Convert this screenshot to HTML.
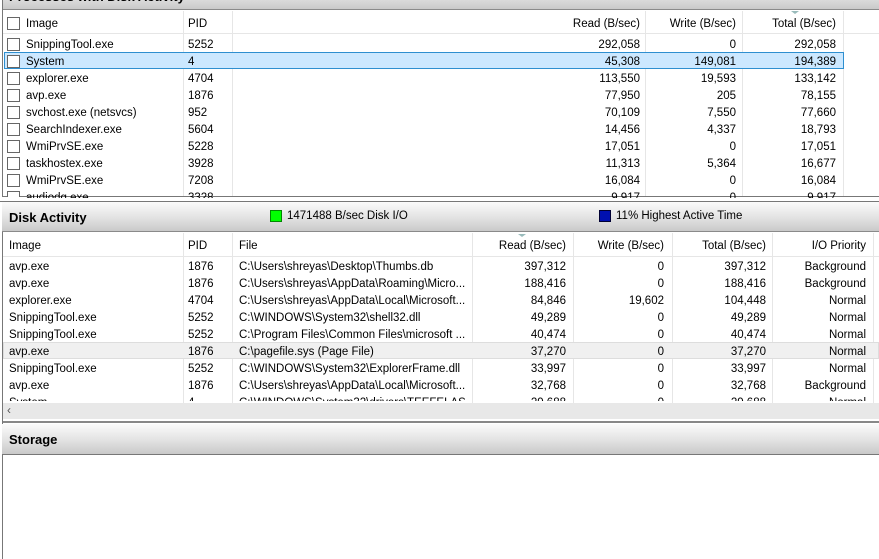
<!DOCTYPE html><html><head><style>
*{margin:0;padding:0;box-sizing:border-box}
body{width:879px;height:559px;overflow:hidden;background:#fff;font-family:"Liberation Sans",sans-serif;font-size:11.5px;color:#000;position:relative}
.a{position:absolute;white-space:nowrap}
.hdr{position:absolute;left:2px;right:0;background:linear-gradient(#fbfbfb,#e2e2e2 55%,#c9c9c9);border-bottom:1px solid #8a8a8a;font-weight:bold;font-size:13px}
.vl{position:absolute;width:1px;background:#e6e6e6}
.r{text-align:right}
.cb{position:absolute;width:13px;height:13px;border:1px solid #666;background:#fff}
</style></head><body>
<div class="hdr" style="top:-20px;height:30px;overflow:hidden"><span class="a" style="left:7px;top:9px">Processes with Disk Activity</span></div>
<div class="a" style="left:2px;top:0;width:1px;height:197px;background:#777"></div>
<div class="a" style="left:2px;top:196px;width:877px;height:1px;background:#777"></div>
<div class="a" style="left:3px;top:11px;width:876px;height:23px;border-bottom:1px solid #e6e6e6"></div>
<div class="vl" style="left:183px;top:11px;height:185px"></div>
<div class="vl" style="left:232px;top:11px;height:185px"></div>
<div class="vl" style="left:645px;top:11px;height:185px"></div>
<div class="vl" style="left:742px;top:11px;height:185px"></div>
<div class="vl" style="left:843px;top:11px;height:185px"></div>
<div class="a" style="left:791px;top:11px;width:0;height:0;border-left:4px solid transparent;border-right:4px solid transparent;border-top:3px solid #9bb"></div>
<div class="a" style="left:4px;top:52px;width:840px;height:17px;background:#cce8ff;border:1px solid #2e8fd0"></div>
<div id="top"></div>
<div class="a" style="left:0;top:201px;width:879px;height:1px;background:#777"></div>
<div class="a" style="left:2px;top:201px;width:1px;height:358px;background:#777"></div>
<div class="hdr" style="top:202px;height:30px"><span class="a" style="left:7px;top:8px">Disk Activity</span>
<span class="a" style="left:268px;top:8px;width:12px;height:12px;background:#0f0;border:1px solid #080"></span>
<span class="a" style="left:285px;top:8px;font-weight:normal;font-size:11.5px">1471488 B/sec Disk I/O</span>
<span class="a" style="left:597px;top:8px;width:12px;height:12px;background:#0010b0;border:1px solid #003"></span>
<span class="a" style="left:614px;top:8px;font-weight:normal;font-size:11.5px">11% Highest Active Time</span></div>
<div class="a" style="left:3px;top:233px;width:876px;height:24px;border-bottom:1px solid #e6e6e6"></div>
<div class="vl" style="left:183px;top:233px;height:170px"></div>
<div class="vl" style="left:232px;top:233px;height:170px"></div>
<div class="vl" style="left:472px;top:233px;height:170px"></div>
<div class="vl" style="left:573px;top:233px;height:170px"></div>
<div class="vl" style="left:672px;top:233px;height:170px"></div>
<div class="vl" style="left:772px;top:233px;height:170px"></div>
<div class="vl" style="left:873px;top:233px;height:170px"></div>
<div class="a" style="left:518px;top:234px;width:0;height:0;border-left:4px solid transparent;border-right:4px solid transparent;border-top:3px solid #9bb"></div>
<div class="a" style="left:3px;top:342px;width:876px;height:17px;background:#f0f0f0;border:1px solid #ddd"></div>
<div id="bot"></div>
<div class="a" style="left:3px;top:403px;width:876px;height:16px;background:#e8e8e8"></div>
<div class="a" style="left:7px;top:403px;font-size:12px;color:#555">&#8249;</div>
<div class="a" style="left:3px;top:421px;width:876px;height:2px;background:#888"></div>
<div class="hdr" style="top:424px;height:31px;border-bottom:1px solid #777"><span class="a" style="left:7px;top:8px">Storage</span></div>
<script>
var T=[["Image","PID","Read (B/sec)","Write (B/sec)","Total (B/sec)"],
["SnippingTool.exe","5252","292,058","0","292,058"],["System","4","45,308","149,081","194,389"],
["explorer.exe","4704","113,550","19,593","133,142"],["avp.exe","1876","77,950","205","78,155"],
["svchost.exe (netsvcs)","952","70,109","7,550","77,660"],["SearchIndexer.exe","5604","14,456","4,337","18,793"],
["WmiPrvSE.exe","5228","17,051","0","17,051"],["taskhostex.exe","3928","11,313","5,364","16,677"],
["WmiPrvSE.exe","7208","16,084","0","16,084"],["audiodg.exe","3328","9,917","0","9,917"]];
var h="";
T.forEach(function(r,i){var y=i==0?16:35+(i-1)*17+2;var ty=y+2;var cl=i==10?"clip-path:inset(0 0 6px 0);":"";var ccl=i==10?"clip-path:inset(0 0 7px 0);":"";
h+='<div class="cb" style="left:7px;top:'+(y+1)+'px;'+ccl+'"></div>';
h+='<div class="a" style="left:26px;top:'+ty+'px;'+cl+'">'+r[0]+'</div><div class="a" style="left:188px;top:'+ty+'px;'+cl+'">'+r[1]+'</div>';
h+='<div class="a r" style="right:239px;top:'+ty+'px;'+cl+'">'+r[2]+'</div><div class="a r" style="right:143px;top:'+ty+'px;'+cl+'">'+r[3]+'</div><div class="a r" style="right:43px;top:'+ty+'px;'+cl+'">'+r[4]+'</div>';});
document.getElementById("top").innerHTML=h;
var B=[["Image","PID","File","Read (B/sec)","Write (B/sec)","Total (B/sec)","I/O Priority"],
["avp.exe","1876","C:\\Users\\shreyas\\Desktop\\Thumbs.db","397,312","0","397,312","Background"],
["avp.exe","1876","C:\\Users\\shreyas\\AppData\\Roaming\\Micro...","188,416","0","188,416","Background"],
["explorer.exe","4704","C:\\Users\\shreyas\\AppData\\Local\\Microsoft...","84,846","19,602","104,448","Normal"],
["SnippingTool.exe","5252","C:\\WINDOWS\\System32\\shell32.dll","49,289","0","49,289","Normal"],
["SnippingTool.exe","5252","C:\\Program Files\\Common Files\\microsoft ...","40,474","0","40,474","Normal"],
["avp.exe","1876","C:\\pagefile.sys (Page File)","37,270","0","37,270","Normal"],
["SnippingTool.exe","5252","C:\\WINDOWS\\System32\\ExplorerFrame.dll","33,997","0","33,997","Normal"],
["avp.exe","1876","C:\\Users\\shreyas\\AppData\\Local\\Microsoft...","32,768","0","32,768","Background"],
["System","4","C:\\WINDOWS\\System32\\drivers\\TEEFELAS...","29,688","0","29,688","Normal"]];
h="";
B.forEach(function(r,i){var y=i==0?240:258+(i-1)*17+3;var cl=i==9?"clip-path:inset(0 0 8px 0);":"";
h+='<div class="a" style="left:9px;top:'+y+'px;'+cl+'">'+r[0]+'</div><div class="a" style="left:188px;top:'+y+'px;'+cl+'">'+r[1]+'</div><div class="a" style="left:239px;top:'+y+'px;'+cl+'">'+r[2]+'</div>';
h+='<div class="a r" style="right:313px;top:'+y+'px;'+cl+'">'+r[3]+'</div><div class="a r" style="right:215px;top:'+y+'px;'+cl+'">'+r[4]+'</div><div class="a r" style="right:113px;top:'+y+'px;'+cl+'">'+r[5]+'</div><div class="a r" style="right:13px;top:'+y+'px;'+cl+'">'+r[6]+'</div>';});
document.getElementById("bot").innerHTML=h;
</script>
</body></html>
